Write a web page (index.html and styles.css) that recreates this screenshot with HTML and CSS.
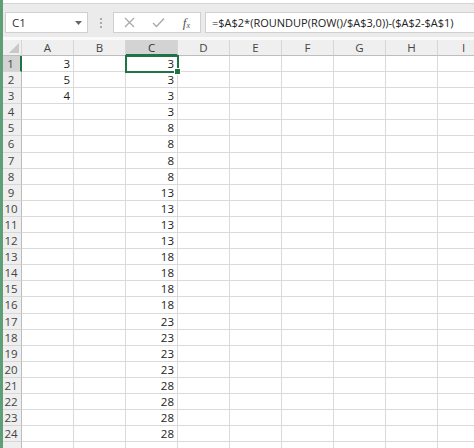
FILE: index.html
```html
<!DOCTYPE html>
<html>
<head>
<meta charset="utf-8">
<link rel="stylesheet" href="styles.css">
</head>
<body>
<div class="app">
  <div class="accent"></div>
  <div class="main">
    <div class="topstrip"></div>
    <div class="fbar">
      <div class="namebox">
        <span class="ref">C1</span>
        <svg class="caret" width="7" height="4" viewBox="0 0 7 4"><path d="M0 0H7L3.5 4Z" fill="#666"/></svg>
      </div>
      <div class="dots"><i></i><i></i><i></i></div>
      <div class="btns">
        <svg width="11" height="11" viewBox="0 0 11 11"><path d="M1 1L10 10M10 1L1 10" stroke="#a8a8a8" stroke-width="1.2" fill="none"/></svg>
        <svg width="13" height="11" viewBox="0 0 13 11"><path d="M1 6L4.5 9.5L12 1.5" stroke="#a8a8a8" stroke-width="1.3" fill="none"/></svg>
        <span class="fx">f<sub>x</sub></span>
      </div>
      <div class="formula">=$A$2*(ROUNDUP(ROW()/$A$3,0))-($A$2-$A$1)</div>
    </div>
    <div class="sheet">
      <div class="corner"><span class="tri"></span></div>
      <div class="ch">A</div><div class="ch">B</div><div class="ch sel">C</div><div class="ch">D</div><div class="ch">E</div><div class="ch">F</div><div class="ch">G</div><div class="ch">H</div><div class="ch">I</div>

      <div class="rh sel">1</div><div class="c">3</div><div class="c"></div><div class="c active">3<span class="handle"></span></div><div class="c"></div><div class="c"></div><div class="c"></div><div class="c"></div><div class="c"></div><div class="c"></div>
      <div class="rh">2</div><div class="c">5</div><div class="c"></div><div class="c">3</div><div class="c"></div><div class="c"></div><div class="c"></div><div class="c"></div><div class="c"></div><div class="c"></div>
      <div class="rh">3</div><div class="c">4</div><div class="c"></div><div class="c">3</div><div class="c"></div><div class="c"></div><div class="c"></div><div class="c"></div><div class="c"></div><div class="c"></div>
      <div class="rh">4</div><div class="c"></div><div class="c"></div><div class="c">3</div><div class="c"></div><div class="c"></div><div class="c"></div><div class="c"></div><div class="c"></div><div class="c"></div>
      <div class="rh">5</div><div class="c"></div><div class="c"></div><div class="c">8</div><div class="c"></div><div class="c"></div><div class="c"></div><div class="c"></div><div class="c"></div><div class="c"></div>
      <div class="rh">6</div><div class="c"></div><div class="c"></div><div class="c">8</div><div class="c"></div><div class="c"></div><div class="c"></div><div class="c"></div><div class="c"></div><div class="c"></div>
      <div class="rh">7</div><div class="c"></div><div class="c"></div><div class="c">8</div><div class="c"></div><div class="c"></div><div class="c"></div><div class="c"></div><div class="c"></div><div class="c"></div>
      <div class="rh">8</div><div class="c"></div><div class="c"></div><div class="c">8</div><div class="c"></div><div class="c"></div><div class="c"></div><div class="c"></div><div class="c"></div><div class="c"></div>
      <div class="rh">9</div><div class="c"></div><div class="c"></div><div class="c">13</div><div class="c"></div><div class="c"></div><div class="c"></div><div class="c"></div><div class="c"></div><div class="c"></div>
      <div class="rh">10</div><div class="c"></div><div class="c"></div><div class="c">13</div><div class="c"></div><div class="c"></div><div class="c"></div><div class="c"></div><div class="c"></div><div class="c"></div>
      <div class="rh">11</div><div class="c"></div><div class="c"></div><div class="c">13</div><div class="c"></div><div class="c"></div><div class="c"></div><div class="c"></div><div class="c"></div><div class="c"></div>
      <div class="rh">12</div><div class="c"></div><div class="c"></div><div class="c">13</div><div class="c"></div><div class="c"></div><div class="c"></div><div class="c"></div><div class="c"></div><div class="c"></div>
      <div class="rh">13</div><div class="c"></div><div class="c"></div><div class="c">18</div><div class="c"></div><div class="c"></div><div class="c"></div><div class="c"></div><div class="c"></div><div class="c"></div>
      <div class="rh">14</div><div class="c"></div><div class="c"></div><div class="c">18</div><div class="c"></div><div class="c"></div><div class="c"></div><div class="c"></div><div class="c"></div><div class="c"></div>
      <div class="rh">15</div><div class="c"></div><div class="c"></div><div class="c">18</div><div class="c"></div><div class="c"></div><div class="c"></div><div class="c"></div><div class="c"></div><div class="c"></div>
      <div class="rh">16</div><div class="c"></div><div class="c"></div><div class="c">18</div><div class="c"></div><div class="c"></div><div class="c"></div><div class="c"></div><div class="c"></div><div class="c"></div>
      <div class="rh">17</div><div class="c"></div><div class="c"></div><div class="c">23</div><div class="c"></div><div class="c"></div><div class="c"></div><div class="c"></div><div class="c"></div><div class="c"></div>
      <div class="rh">18</div><div class="c"></div><div class="c"></div><div class="c">23</div><div class="c"></div><div class="c"></div><div class="c"></div><div class="c"></div><div class="c"></div><div class="c"></div>
      <div class="rh">19</div><div class="c"></div><div class="c"></div><div class="c">23</div><div class="c"></div><div class="c"></div><div class="c"></div><div class="c"></div><div class="c"></div><div class="c"></div>
      <div class="rh">20</div><div class="c"></div><div class="c"></div><div class="c">23</div><div class="c"></div><div class="c"></div><div class="c"></div><div class="c"></div><div class="c"></div><div class="c"></div>
      <div class="rh">21</div><div class="c"></div><div class="c"></div><div class="c">28</div><div class="c"></div><div class="c"></div><div class="c"></div><div class="c"></div><div class="c"></div><div class="c"></div>
      <div class="rh">22</div><div class="c"></div><div class="c"></div><div class="c">28</div><div class="c"></div><div class="c"></div><div class="c"></div><div class="c"></div><div class="c"></div><div class="c"></div>
      <div class="rh">23</div><div class="c"></div><div class="c"></div><div class="c">28</div><div class="c"></div><div class="c"></div><div class="c"></div><div class="c"></div><div class="c"></div><div class="c"></div>
      <div class="rh">24</div><div class="c"></div><div class="c"></div><div class="c">28</div><div class="c"></div><div class="c"></div><div class="c"></div><div class="c"></div><div class="c"></div><div class="c"></div>
      <div class="rh"></div><div class="c"></div><div class="c"></div><div class="c"></div><div class="c"></div><div class="c"></div><div class="c"></div><div class="c"></div><div class="c"></div><div class="c"></div>
    </div>
  </div>
</div>
</body>
</html>
```
FILE: styles.css
```css
html, body {
  margin: 0;
  padding: 0;
  background: #fff;
  overflow: hidden;
}
body {
  width: 474px;
  height: 448px;
  font-family: "Open Sans", "Noto Sans", sans-serif;
  color: #222;
}
.app {
  display: flex;
  height: 448px;
  overflow: hidden;
}
.accent {
  width: 3px;
  flex: none;
  background: #5e9f78;
}
.main {
  flex: 1;
  min-width: 0;
  display: flex;
  flex-direction: column;
  overflow: hidden;
}
.main > * {
  flex: none;
}
.topstrip {
  height: 3px;
  background: #fff;
  border-bottom: 1px solid #d4d4d4;
}
.fbar {
  height: 36px;
  box-sizing: border-box;
  background: #ebebeb;
  display: flex;
  align-items: flex-start;
  padding: 8px 0 0 2px;
  border-bottom: 3px solid #fafafa;
}
.namebox {
  width: 83px;
  height: 21px;
  box-sizing: border-box;
  background: #fff;
  border: 1px solid #d0d0d0;
  display: flex;
  align-items: center;
  justify-content: space-between;
  padding: 0 5px 0 6px;
  font-size: 11.5px;
  color: #333;
}
.dots {
  width: 25px;
  display: flex;
  flex-direction: column;
  align-items: center;
  gap: 2px;
  padding-top: 6px;
}
.dots i {
  width: 2px;
  height: 2px;
  background: #aaa;
}
.btns {
  width: 88px;
  height: 21px;
  box-sizing: border-box;
  background: #fff;
  border: 1px solid #d0d0d0;
  display: flex;
  align-items: center;
  justify-content: space-between;
  padding: 0 10px 0 10px;
}
.fx {
  font-family: "Liberation Serif", serif;
  font-style: italic;
  font-size: 13px;
  color: #555;
  line-height: 1;
}
.fx sub {
  font-size: 8px;
  vertical-align: -1px;
}
.formula {
  margin-left: 4px;
  flex: 1;
  height: 21px;
  box-sizing: border-box;
  background: #fff;
  border: 1px solid #d0d0d0;
  border-right: none;
  padding-left: 6px;
  font-size: 11px;
  line-height: 19px;
  color: #222;
  white-space: nowrap;
  overflow: hidden;
}
.sheet {
  display: grid;
  grid-template-columns: 19px repeat(9, 52px);
  grid-template-rows: 16px repeat(25, 16.1px);
  font-size: 11.5px;
}
.corner, .ch {
  background: #efefef;
  border-right: 1px solid #d6d6d6;
  border-bottom: 1px solid #bdbdbd;
  box-sizing: border-box;
}
.corner {
  position: relative;
}
.tri {
  position: absolute;
  right: 2px;
  bottom: 2px;
  width: 0;
  height: 0;
  border-left: 10px solid transparent;
  border-bottom: 10px solid #c8c8c8;
}
.ch {
  text-align: center;
  line-height: 15px;
  color: #444;
}
.ch.sel {
  background: #d3d3d3;
  border-bottom: 2px solid #217346;
  color: #333;
}
.rh {
  background: #efefef;
  border-right: 1px solid #bdbdbd;
  border-bottom: 1px solid #d6d6d6;
  box-sizing: border-box;
  text-align: center;
  line-height: 15px;
  color: #444;
  padding-right: 2px;
}
.rh.sel {
  background: #d3d3d3;
  border-right: 2px solid #217346;
}
.c {
  border-right: 1px solid #dadada;
  border-bottom: 1px solid #dadada;
  box-sizing: border-box;
  text-align: right;
  padding-right: 3px;
  line-height: 15px;
  color: #222;
  position: relative;
}
.c.active {
  outline: 2px solid #217346;
  outline-offset: -1px;
  z-index: 2;
}
.handle {
  position: absolute;
  right: -4px;
  bottom: -4px;
  width: 5px;
  height: 5px;
  background: #217346;
  border: 1px solid #fff;
}
```
